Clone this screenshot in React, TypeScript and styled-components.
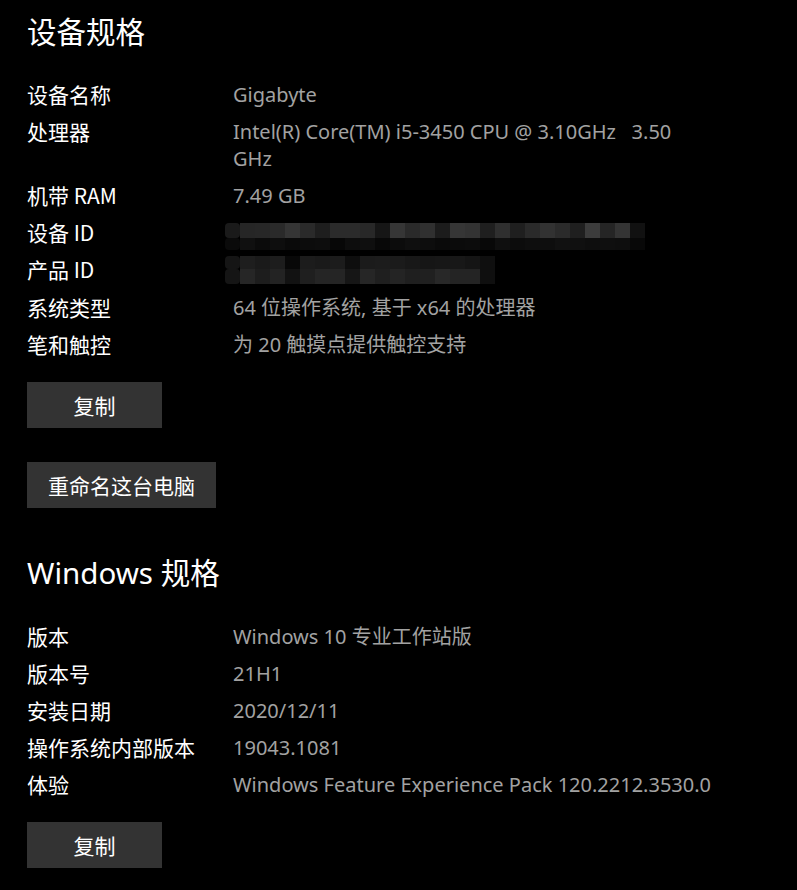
import styled, { createGlobalStyle } from 'styled-components';

const GlobalStyle = createGlobalStyle`
    html, body {
        margin: 0;
        padding: 0;
        background-color: #000000;
    }

    body {
        font-family: "Noto Sans CJK SC", "Noto Sans", sans-serif;
        color: #ffffff;
    }
`;

const Page = styled.div`
    width: 797px;
    min-height: 890px;
    padding: 12px 0 0 27px;
    box-sizing: border-box;

    display: flex;
    flex-direction: column;
    align-items: flex-start;

    background-color: #000000;

    & > * {
        flex-shrink: 0;
    }
`;

const Heading = styled.h2<{ top: number; bottom: number }>`
    margin: ${({ top }) => top}px 0 ${({ bottom }) => bottom}px 0;

    font-family: "Noto Sans", "Noto Sans CJK SC", sans-serif;
    font-size: 29.5px;
    font-weight: 400;
    line-height: 40px;
    color: #ffffff;
`;

const SpecList = styled.div`
    display: flex;
    flex-direction: column;
    gap: 10px;
`;

const SpecRow = styled.div`
    display: grid;
    grid-template-columns: 206px 540px;

    line-height: 27px;
`;

const Label = styled.div`
    font-size: 21px;
    color: #ffffff;
`;

const Value = styled.div`
    font-family: "Noto Sans", "Noto Sans CJK SC", sans-serif;
    font-size: 20px;
    color: #a2a2a2;
    white-space: pre-wrap;
`;

const Mosaic = styled.svg<{ shift: number }>`
    display: block;
    margin: ${({ shift }) => shift}px 0 ${({ shift }) => -shift}px -8px;
`;

const ActionButton = styled.button<{ top: number }>`
    margin-top: ${({ top }) => top}px;
    min-width: 135px;
    height: 46px;
    padding: 0 21px;

    border: none;
    border-radius: 0;

    font-family: inherit;
    font-size: 21px;
    color: #ffffff;
    background-color: #333333;

    cursor: pointer;

    &:hover {
        background-color: #444444;
    }
`;

// pixelated (blurred) identifiers, 15px blocks
const deviceTop = ['#1a1a1a', '#262626', '#272727', '#2a2a2a', '#353535', '#2a2a2a', '#1e1e1e', '#2b2b2b', '#2b2b2b', '#282828', '#161616', '#363636', '#2a2a2a', '#303030', '#1c1c1c', '#363636', '#333333', '#1f1f1f', '#2f2f2f', '#1f1f1f', '#2a2a2a', '#323232', '#2b2b2b', '#1f1f1f', '#3c3c3c', '#252525', '#343434', '#111111'];
const deviceBottom = ['#0a0a0a', '#101010', '#0b0b0b', '#0e0e0e', '#0a0a0a', '#0c0c0c', '#0d0d0d', '#070707', '#0d0d0d', '#0f0f0f', '#080808', '#0c0c0c', '#0f0f0f', '#0d0d0d', '#0a0a0a', '#0b0b0b', '#0c0c0c', '#080808', '#0f0f0f', '#0c0c0c', '#0e0e0e', '#0e0e0e', '#111111', '#101010', '#0e0e0e', '#0f0f0f', '#0e0e0e', '#080808'];
const productTop = ['#151515', '#1e1e1e', '#1a1a1a', '#1d1d1d', '#080808', '#1c1c1c', '#1a1a1a', '#1c1c1c', '#0e0e0e', '#1b1b1b', '#1c1c1c', '#1b1b1b', '#181818', '#161616', '#171717', '#181818', '#151515', '#0f0f0f'];
const productBottom = ['#151515', '#262626', '#1d1d1d', '#232323', '#121212', '#1f1f1f', '#252525', '#252525', '#161616', '#262626', '#1f1f1f', '#242424', '#1f1f1f', '#202020', '#282828', '#242424', '#242424', '#0f0f0f'];

const MosaicBlock: React.FC<{ top: string[]; bottom: string[]; shift: number; heights: [number, number] }> = ({ top, bottom, shift, heights }) => {
    const width = 15 * top.length;
    return (
        <Mosaic shift={shift} width={width} height={heights[0] + heights[1]} viewBox={`0 0 ${width} ${heights[0] + heights[1]}`}>
            {top.map((c, i) => (
                <rect key={`t${i}`} x={i * 15} y={0} width={15} height={heights[0]} fill={c} rx={i === 0 ? 4 : 0} />
            ))}
            {bottom.map((c, i) => (
                <rect key={`b${i}`} x={i * 15} y={heights[0]} width={15} height={heights[1]} fill={c} rx={i === 0 ? 4 : 0} />
            ))}
        </Mosaic>
    );
};

const deviceSpecs: [string, React.ReactNode][] = [
    ['设备名称', 'Gigabyte'],
    ['处理器', 'Intel(R) Core(TM) i5-3450 CPU @ 3.10GHz   3.50\nGHz'],
    ['机带 RAM', '7.49 GB'],
    ['设备 ID', <MosaicBlock top={deviceTop} bottom={deviceBottom} shift={4} heights={[15, 12]} />],
    ['产品 ID', <MosaicBlock top={productTop} bottom={productBottom} shift={0} heights={[13, 15]} />],
    ['系统类型', '64 位操作系统, 基于 x64 的处理器'],
    ['笔和触控', '为 20 触摸点提供触控支持'],
];

const windowsSpecs: [string, string][] = [
    ['版本', 'Windows 10 专业工作站版'],
    ['版本号', '21H1'],
    ['安装日期', '2020/12/11'],
    ['操作系统内部版本', '19043.1081'],
    ['体验', 'Windows Feature Experience Pack 120.2212.3530.0'],
];

const App: React.FC = () => {
    return (
        <>
            <GlobalStyle />
            <Page>

                <Heading top={0} bottom={29}>设备规格</Heading>
                <SpecList>
                    {deviceSpecs.map(([label, value]) => (
                        <SpecRow key={label}>
                            <Label>{label}</Label>
                            <Value>{value}</Value>
                        </SpecRow>
                    ))}
                </SpecList>
                <ActionButton top={24}>复制</ActionButton>
                <ActionButton top={34}>重命名这台电脑</ActionButton>

                <Heading top={45} bottom={30}>Windows 规格</Heading>
                <SpecList>
                    {windowsSpecs.map(([label, value]) => (
                        <SpecRow key={label}>
                            <Label>{label}</Label>
                            <Value>{value}</Value>
                        </SpecRow>
                    ))}
                </SpecList>
                <ActionButton top={24}>复制</ActionButton>

            </Page>
        </>
    );
}

export default App;
